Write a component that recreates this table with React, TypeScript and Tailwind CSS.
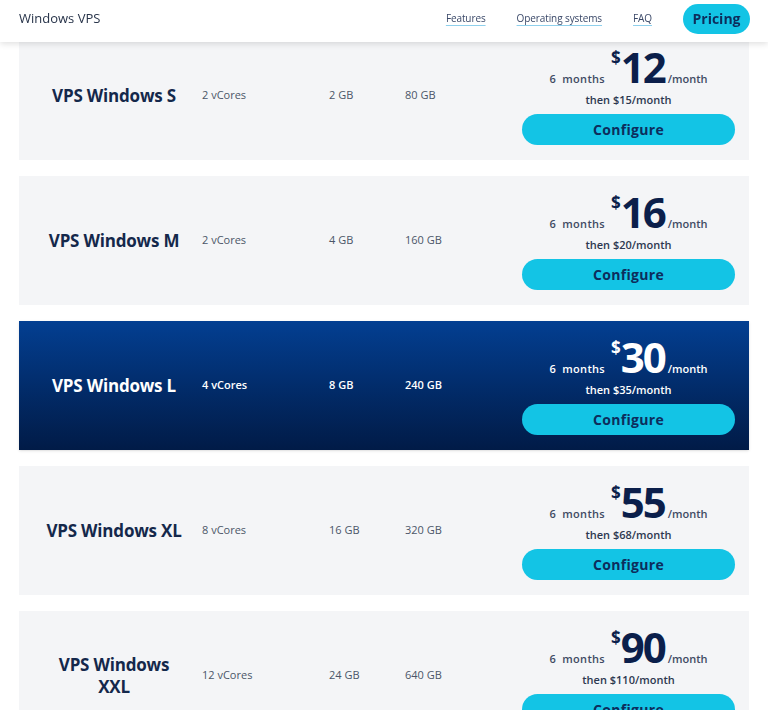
import React from "react";

// Plans shown in the pricing list
const PLANS = [
  { name: "VPS Windows S", cores: "2 vCores", ram: "2 GB", disk: "80 GB", price: "12", then: "$15" },
  { name: "VPS Windows M", cores: "2 vCores", ram: "4 GB", disk: "160 GB", price: "16", then: "$20" },
  { name: "VPS Windows L", cores: "4 vCores", ram: "8 GB", disk: "240 GB", price: "30", then: "$35", featured: true },
  { name: "VPS Windows XL", cores: "8 vCores", ram: "16 GB", disk: "320 GB", price: "55", then: "$68" },
  { name: "VPS Windows XXL", cores: "12 vCores", ram: "24 GB", disk: "640 GB", price: "90", then: "$110" },
];

const NAV = ["Features", "Operating systems", "FAQ"];

type Plan = (typeof PLANS)[number];

function PlanCard({ plan }: { plan: Plan }) {
  const dark = !!plan.featured;
  return (
    <div
      className={
        dark
          ? "flex h-[129px] items-center bg-gradient-to-b from-[#033f92] to-[#011b47] shadow-sm"
          : "flex h-[129px] items-center bg-[#f4f5f7]"
      }
    >
      {/* name */}
      <div
        className={
          "ml-[25px] w-[140px] text-center text-[17px] font-bold leading-[22px] tracking-[-0.2px] " +
          (dark ? "text-white" : "text-[#14284b]")
        }
      >
        {plan.name}
      </div>

      {/* specs */}
      <div
        className={
          "ml-[18px] flex text-[11px] " + (dark ? "font-semibold text-white" : "text-[#4b5568]")
        }
      >
        <span className="w-[127px]">{plan.cores}</span>
        <span className="w-[76px]">{plan.ram}</span>
        <span>{plan.disk}</span>
      </div>

      {/* price + CTA */}
      <div className="ml-auto mr-[14px] flex h-full w-[213px] flex-col items-center pt-[15px] pb-[15px]">
        <div className="flex h-[42px] items-baseline">
          <span
            className={
              "mr-[6px] text-[11px] font-semibold tracking-[0.3px] " +
              (dark ? "text-white" : "text-[#3f4b63]")
            }
          >
            6&nbsp; months
          </span>
          <span
            className={
              "mt-[3px] self-start text-[17px] font-bold leading-none " + (dark ? "text-white" : "text-[#0b1f4b]")
            }
          >
            $
          </span>
          <span
            className={
              "text-[42px] font-bold leading-none tracking-[-2px] " + (dark ? "text-white" : "text-[#0b1f4b]")
            }
          >
            {plan.price}
          </span>
          <span
            className={
              "ml-[3px] text-[11px] font-semibold " + (dark ? "text-white" : "text-[#3f4b63]")
            }
          >
            /month
          </span>
        </div>
        <div
          className={
            "mt-[4px] text-[11px] font-semibold leading-[16px] " + (dark ? "text-white" : "text-[#2d3850]")
          }
        >
          then {plan.then}/month
        </div>
        <button className="mt-[6px] h-[31px] w-full rounded-full bg-[#13c4e5] text-[14px] font-bold tracking-[0.3px] text-[#0d2d5c]">
          Configure
        </button>
      </div>
    </div>
  );
}

export default function App() {
  return (
    <div className="relative h-[710px] overflow-hidden bg-white font-['Open_Sans',sans-serif]">
      {/* fixed header */}
      <header className="fixed inset-x-0 top-0 z-10 flex h-[42px] items-center bg-white pb-[5px] pl-[19px] pr-[18px] shadow-[0_2px_6px_rgba(0,0,0,0.12)]">
        <span className="text-[13px] text-[#273349]">Windows VPS</span>
        <nav className="ml-auto flex items-center">
          {NAV.map((item) => (
            <a
              key={item}
              href="#"
              className="mr-[31px] text-[10px] tracking-[-0.1px] text-[#3a4868] underline decoration-[#8fd0ec] underline-offset-[3px]"
            >
              {item}
            </a>
          ))}
          <a
            href="#"
            className="flex h-[30px] w-[67px] items-center justify-center rounded-full bg-[#13c4e5] text-[14px] font-bold text-[#0d2d5c]"
          >
            Pricing
          </a>
        </nav>
      </header>

      {/* plan list */}
      <div className="flex flex-col gap-[16px] px-[19px] pt-[31px]">
        {PLANS.map((p) => (
          <PlanCard key={p.name} plan={p} />
        ))}
      </div>
    </div>
  );
}
